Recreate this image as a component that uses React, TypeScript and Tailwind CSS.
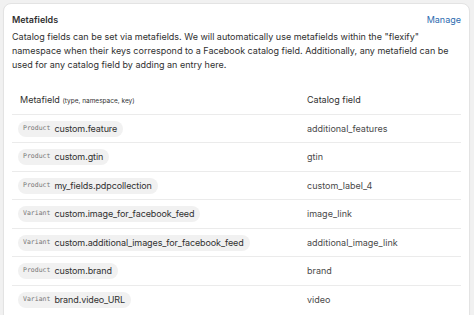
import React from 'react';

interface Row {
  type: 'Product' | 'Variant';
  key: string;
  field: string;
}

const rows: Row[] = [
  { type: 'Product', key: 'custom.feature', field: 'additional_features' },
  { type: 'Product', key: 'custom.gtin', field: 'gtin' },
  { type: 'Product', key: 'my_fields.pdpcollection', field: 'custom_label_4' },
  { type: 'Variant', key: 'custom.image_for_facebook_feed', field: 'image_link' },
  { type: 'Variant', key: 'custom.additional_images_for_facebook_feed', field: 'additional_image_link' },
  { type: 'Product', key: 'custom.brand', field: 'brand' },
  { type: 'Variant', key: 'brand.video_URL', field: 'video' },
];

const App: React.FC = () => {
  return (
    <div className="h-[315px] w-[474px] overflow-hidden bg-[#f1f1f1] pl-[3px] pt-[3px] font-['Inter','Liberation_Sans',sans-serif] text-[#303030]">
      <div className="w-[467px] rounded-[8px] border border-[#e3e3e3] bg-white px-[8px] pt-[9px] pb-4 shadow-[0_1px_1px_rgba(0,0,0,0.06)]">
        <div className="flex h-[14px] items-center justify-between leading-[14px]">
          <h2 className="text-[9px] font-semibold">Metafields</h2>
          <a href="#" className="text-[9px] text-[#2d6cb0]">Manage</a>
        </div>
        <p className="mt-[3px] text-[9px] leading-[14px]">
          Catalog fields can be set via metafields. We will automatically use metafields within the "flexify" namespace when their keys correspond to a Facebook catalog field. Additionally, any metafield can be used for any catalog field by adding an entry here.
        </p>

        <div className="mt-[14px]">
          <div className="flex h-[28.5px] items-center border-b border-[#ebebeb] text-[9px]">
            <div className="w-[295px] pl-[8px]">
              Metafield <span className="text-[6.5px]">(type, namespace, key)</span>
            </div>
            <div>Catalog field</div>
          </div>
          {rows.map((row, i) => (
            <div
              key={row.key}
              className={`flex h-[28.5px] items-center text-[9px] ${i < rows.length - 1 ? 'border-b border-[#ebebeb]' : ''}`}
            >
              <div className="w-[295px] pl-[6px]">
                <span className="inline-flex h-[16px] items-center gap-[4px] rounded-full bg-[#f1f1f1] pl-[5px] pr-[6px]">
                  <span className="font-['DejaVu_Sans_Mono',monospace] text-[6.5px] text-[#777]">{row.type}</span>
                  <span className="text-[9px] tracking-[-0.1px]">{row.key}</span>
                </span>
              </div>
              <div className="text-[#4a4a4a]">{row.field}</div>
            </div>
          ))}
        </div>
      </div>
    </div>
  );
};

export default App;
